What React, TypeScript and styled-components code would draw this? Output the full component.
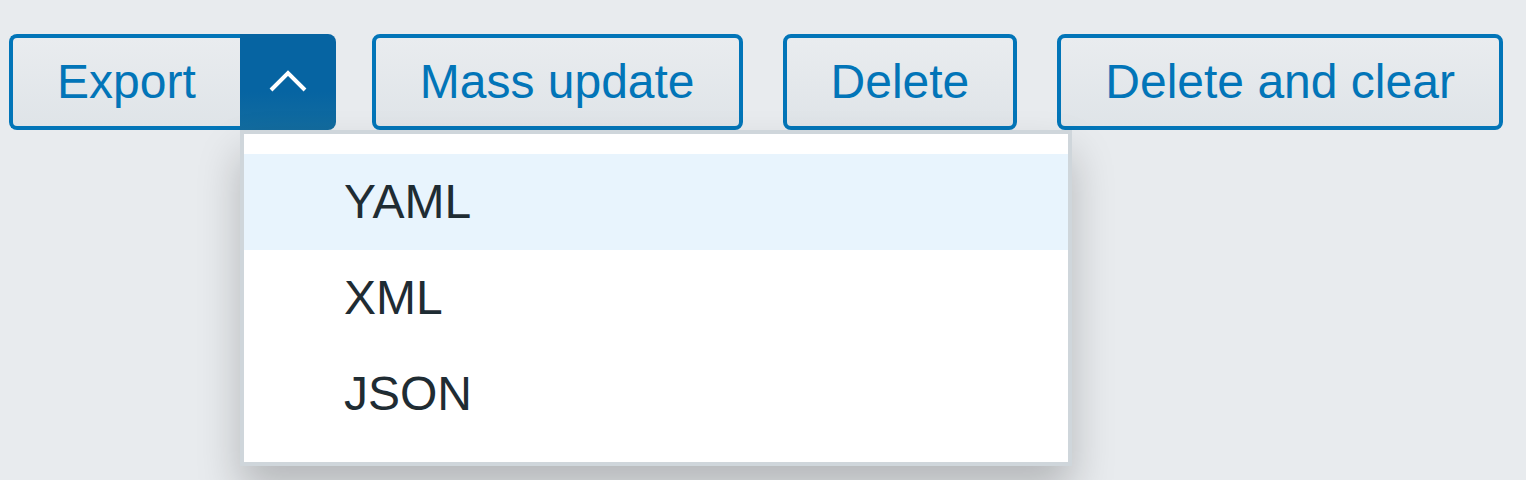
import styled, { createGlobalStyle } from "styled-components";

const GlobalStyle = createGlobalStyle`
  html, body {
    margin: 0;
    padding: 0;
    background: #e8ebee;
    font-family: "Liberation Sans", Arial, sans-serif;
  }
`;

const Page = styled.div`
  min-height: 480px;
  background: #e8ebee;
`;

const Toolbar = styled.div`
  display: flex;
  align-items: flex-start;
  gap: 40px;
  padding: 34px 0 0 9px;
`;

const SplitGroup = styled.div`
  position: relative;
  display: flex;
  margin-right: -4px;
`;

const Button = styled.button<{ $joined?: boolean }>`
  box-sizing: border-box;
  height: 96px;
  padding: 0 44px;
  border: 4px solid #0275b8;
  border-right-width: ${(p) => (p.$joined ? 0 : 4)}px;
  border-radius: ${(p) => (p.$joined ? "8px 0 0 8px" : "8px")};
  background: linear-gradient(#e9ecef, #dfe4e8);
  color: #0275b8;
  font-family: "Liberation Sans", Arial, sans-serif;
  font-size: 48px;
  line-height: 88px;
  white-space: nowrap;
  cursor: pointer;
`;

const Toggle = styled.button`
  box-sizing: border-box;
  width: 96px;
  height: 96px;
  padding: 0;
  border: none;
  border-radius: 0 8px 8px 0;
  background: linear-gradient(#0664a2 60%, #136c9f);
  display: flex;
  align-items: center;
  justify-content: center;
  cursor: pointer;
`;

const Menu = styled.ul`
  position: absolute;
  top: 96px;
  left: 231px;
  z-index: 2;
  box-sizing: border-box;
  width: 832px;
  margin: 0;
  padding: 20px 0;
  list-style: none;
  background: #ffffff;
  border: 4px solid #cfd6db;
  box-shadow: 0 24px 40px rgba(0, 0, 0, 0.22);
`;

const MenuItem = styled.li<{ $active?: boolean }>`
  height: 96px;
  padding-left: 100px;
  line-height: 96px;
  font-size: 48px;
  color: #1f2c33;
  background: ${(p) => (p.$active ? "#e8f4fd" : "transparent")};
`;

const formats = ["YAML", "XML", "JSON"];

const App = () => {
  return (
    <Page>
      <GlobalStyle />
      <Toolbar>
        <SplitGroup>
          <Button $joined>Export</Button>
          <Toggle aria-label="Export format">
            <svg width="40" height="24" viewBox="0 0 40 24">
              <polyline
                points="3,20 20,3 37,20"
                fill="none"
                stroke="#ffffff"
                strokeWidth="4"
              />
            </svg>
          </Toggle>
          <Menu>
            {formats.map((f, i) => (
              <MenuItem key={f} $active={i === 0}>
                {f}
              </MenuItem>
            ))}
          </Menu>
        </SplitGroup>
        <Button>Mass update</Button>
        <Button>Delete</Button>
        <Button>Delete and clear</Button>
      </Toolbar>
    </Page>
  );
};

export default App;
